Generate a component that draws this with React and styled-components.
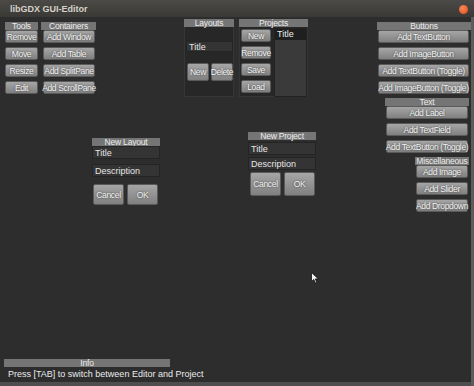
import React from 'react';
import styled, { createGlobalStyle } from 'styled-components';

const Global = createGlobalStyle`
  html, body { margin: 0; padding: 0; background: #2d2d2d; }
  body { font-family: "Liberation Sans", "DejaVu Sans", sans-serif; }
`;

const Frame = styled.div`
  width: 474px;
  height: 386px;
  display: flex;
  flex-direction: column;
  background: #2d2d2d;
  overflow: hidden;
`;

const TitleBar = styled.div`
  height: 17px;
  flex: none;
  display: flex;
  align-items: center;
  justify-content: space-between;
  padding: 0 6px 0 10px;
  background: linear-gradient(#4b4a46, #3a3935);
  color: #d6d2c9;
  font-size: 9px;
  font-weight: bold;
`;

const CloseDot = styled.span`
  width: 9px;
  height: 9px;
  border-radius: 50%;
  background: radial-gradient(circle at 40% 35%, #f48a5a, #df4b16);
  margin-top: 2px;
`;

const Body = styled.div`
  flex: 1;
  display: flex;
`;

const Canvas = styled.div`
  position: relative;
  flex: 1;
  background: #2d2d2d;
  border-bottom: 4px solid #4e4e4e;
`;

const RightEdge = styled.div`
  width: 3px;
  background: #5c5c5c;
`;

const Pane = styled.div`
  position: absolute;
  left: ${p => p.$x}px;
  top: ${p => p.$y}px;
  width: ${p => p.$w}px;
  height: ${p => (p.$h ? `${p.$h}px` : 'auto')};
  display: flex;
  flex-direction: column;
  background: ${p => (p.$dark ? '#272727' : 'transparent')};
  box-shadow: ${p => (p.$dark ? 'inset 0 0 0 1px #363636' : 'none')};
`;

const Header = styled.div`
  height: 8px;
  line-height: 8px;
  background: #757575;
  color: #ececec;
  font-size: 8.5px;
  letter-spacing: -0.2px;
  text-align: center;
  white-space: nowrap;
`;

const Stack = styled.div`
  display: flex;
  flex-direction: column;
  gap: ${p => p.$gap}px;
  padding: ${p => p.$pad || '0'};
`;

const Row = styled.div`
  display: flex;
  gap: ${p => p.$gap}px;
  padding: ${p => p.$pad || '0'};
`;

const Button = styled.div`
  height: ${p => p.$h || 13}px;
  flex: ${p => (p.$grow ? 1 : 'none')};
  min-width: 0;
  display: flex;
  align-items: center;
  justify-content: center;
  background: linear-gradient(#a6a6a6, #808080);
  border: 1px solid #5a5a5a;
  border-radius: 2px;
  box-sizing: border-box;
  color: #f4f4f4;
  font-size: 8.5px;
  letter-spacing: -0.35px;
  text-shadow: 0 0 2px #333;
  white-space: nowrap;
`;

const Field = styled.div`
  height: ${p => p.$h || 13}px;
  display: flex;
  align-items: center;
  padding-left: 2px;
  background: #343434;
  border: 1px solid #242424;
  box-sizing: border-box;
  color: #e6e6e6;
  font-size: 9px;
`;

const List = styled.div`
  flex: 1;
  display: flex;
  flex-direction: column;
  background: #3a3a3a;
  border: 1px solid #222;
`;

const ListItem = styled.div`
  height: 11px;
  line-height: 11px;
  padding-left: 2px;
  background: #1f1f1f;
  color: #eee;
  font-size: 9px;
`;

const InfoText = styled.div`
  height: 14px;
  line-height: 14px;
  padding-left: 4px;
  color: #ececec;
  font-size: 9px;
  white-space: nowrap;
`;

const Cursor = styled.svg`
  position: absolute;
  left: 311px;
  top: 255px;
`;

const Buttons = ({ items, h }) => items.map(t => <Button key={t} $h={h}>{t}</Button>);

export default function App() {
  return (
    <Frame>
      <Global />
      <TitleBar>
        <span>libGDX GUI-Editor</span>
        <CloseDot />
      </TitleBar>
      <Body>
        <Canvas>
          <Pane $x={5} $y={5} $w={33}>
            <Header>Tools</Header>
            <Stack $gap={4}>
              <Buttons items={['Remove', 'Move', 'Resize', 'Edit']} />
            </Stack>
          </Pane>

          <Pane $x={41} $y={5} $w={55}>
            <Header>Containers</Header>
            <Stack $gap={4} $pad="0 1px 0 2px">
              <Buttons items={['Add Window', 'Add Table', 'Add SplitPane', 'Add ScrollPane']} />
            </Stack>
          </Pane>

          <Pane $x={184} $y={2} $w={50} $h={78} $dark>
            <Header>Layouts</Header>
            <Stack $gap={11} $pad="14px 1px 0 2px">
              <Field $h={11}>Title</Field>
              <Row $gap={2} $pad="0 0 0 1px">
                <Button $h={18} $grow>New</Button>
                <Button $h={18} $grow>Delete</Button>
              </Row>
            </Stack>
          </Pane>

          <Pane $x={239} $y={2} $w={69} $h={78} $dark>
            <Header>Projects</Header>
            <Row $gap={3} $pad="1px 1px 0 2px" style={{ flex: 1 }}>
              <Stack $gap={4} $pad="1px 0 0 0" style={{ width: 30 }}>
                <Buttons items={['New', 'Remove', 'Save', 'Load']} />
              </Stack>
              <List>
                <ListItem>Title</ListItem>
              </List>
            </Row>
          </Pane>

          <Pane $x={377} $y={5} $w={94}>
            <Header>Buttons</Header>
            <Stack $gap={4} $pad="0 2px 0 1px">
              <Buttons items={['Add TextButton', 'Add ImageButton', 'Add TextButton (Toggle)', 'Add ImageButton (Toggle)']} />
            </Stack>
          </Pane>

          <Pane $x={385} $y={81} $w={84}>
            <Header>Text</Header>
            <Stack $gap={4} $pad="0 1px">
              <Buttons items={['Add Label', 'Add TextField', 'Add TextButton (Toggle)']} />
            </Stack>
          </Pane>

          <Pane $x={415} $y={140} $w={54}>
            <Header>Miscellaneous</Header>
            <Stack $gap={4} $pad="0 1px">
              <Buttons items={['Add Image', 'Add Slider', 'Add Dropdown']} />
            </Stack>
          </Pane>

          <Pane $x={92} $y={121} $w={68}>
            <Header>New Layout</Header>
            <Stack $gap={5}>
              <Field>Title</Field>
              <Field>Description</Field>
              <Row $gap={3} $pad="2px 2px 0 1px">
                <Button $h={21} $grow>Cancel</Button>
                <Button $h={21} $grow>OK</Button>
              </Row>
            </Stack>
          </Pane>

          <Pane $x={248} $y={115} $w={68}>
            <Header>New Project</Header>
            <Stack $gap={2} $pad="2px 0 0 0">
              <Field>Title</Field>
              <Field>Description</Field>
              <Row $gap={3} $pad="0 1px 0 2px">
                <Button $h={24} $grow>Cancel</Button>
                <Button $h={24} $grow>OK</Button>
              </Row>
            </Stack>
          </Pane>

          <Pane $x={4} $y={342} $w={166}>
            <Header>Info</Header>
            <InfoText>Press [TAB] to switch between Editor and Project</InfoText>
          </Pane>

          <Cursor width="8" height="12" viewBox="0 0 8 12">
            <path d="M0.5 0.5 L0.5 9.5 L2.8 7.4 L4.4 11 L5.8 10.4 L4.3 6.9 L7.4 6.9 Z" fill="#f2f2f2" stroke="#111" strokeWidth="0.8" />
          </Cursor>
        </Canvas>
        <RightEdge />
      </Body>
    </Frame>
  );
}
